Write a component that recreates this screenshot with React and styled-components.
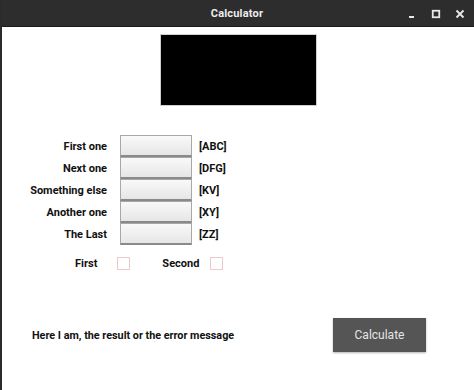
import React from "react";
import styled, { createGlobalStyle } from "styled-components";

const Global = createGlobalStyle`
  html, body { margin: 0; padding: 0; background: #fff; }
  body { font-family: Roboto, "Liberation Sans", sans-serif; }
`;

const Window = styled.div`
  width: 474px;
  height: 390px;
  display: flex;
  flex-direction: column;
  box-sizing: border-box;
  border-left: 2px solid #2b2b2b;
  background: #fff;
  overflow: hidden;
`;

const TitleBar = styled.div`
  height: 27px;
  flex: none;
  background: #2d2d2d;
  border-bottom: 1px solid #1a1a1a;
  box-sizing: border-box;
  margin-left: -2px;
  position: relative;
  display: flex;
  align-items: center;
  justify-content: center;
`;

const Title = styled.div`
  color: #ececec;
  font-family: Roboto, "Noto Sans", sans-serif;
  font-weight: 700;
  font-size: 11px;
  letter-spacing: 0.2px;
`;

const Controls = styled.div`
  position: absolute;
  right: 8px;
  top: 0;
  height: 27px;
  display: flex;
  align-items: center;
  gap: 12px;
`;

const Ctl = styled.div`
  width: 12px;
  height: 12px;
  display: flex;
  align-items: center;
  justify-content: center;
`;

const Body = styled.div`
  flex: 1;
  display: flex;
  flex-direction: column;
`;

const Display = styled.div`
  margin: 7px 0 0 158px;
  width: 155px;
  height: 70px;
  background: #000;
  border: 1px solid #cfcfcf;
`;

const Form = styled.div`
  margin-top: 29px;
  display: grid;
  grid-template-columns: 105px 72px auto;
  grid-auto-rows: 22px;
`;

const Label = styled.div`
  font-weight: 700;
  font-size: 11px;
  color: #111;
  text-align: right;
  align-self: center;
`;

const InputCell = styled.div`
  margin-left: 13px;
  width: 72px;
  box-sizing: border-box;
  height: 22px;
  border: 1px solid #a8a8a8;
  border-bottom: 2px solid #8a8a8a;
  background: linear-gradient(#f9f9f9, #e6e6e6);
`;

const Unit = styled.div`
  font-weight: 700;
  font-size: 11px;
  color: #111;
  align-self: center;
  padding-left: 20px;
`;

const Checks = styled.div`
  margin-top: 11px;
  display: flex;
  align-items: center;
  height: 14px;
  padding-left: 73px;
`;

const CheckLabel = styled.span`
  font-weight: 700;
  font-size: 11px;
  color: #111;
  margin-right: ${(p) => p.$gap}px;
`;

const Box = styled.span`
  width: 11px;
  height: 11px;
  border: 1px solid #efc9c9;
  background: #fff;
  margin-right: ${(p) => p.$gap}px;
`;

const Bottom = styled.div`
  margin-top: 48px;
  display: flex;
  align-items: center;
  padding-left: 30px;
`;

const Result = styled.div`
  font-weight: 700;
  font-size: 10.8px;
  color: #111;
  flex: 1;
`;

const Button = styled.button`
  width: 93px;
  height: 34px;
  margin-right: 48px;
  background: #555555;
  color: #e6e6e6;
  border: none;
  box-shadow: 0 1px 2px rgba(0,0,0,0.3);
  font-family: Roboto, "Liberation Sans", sans-serif;
  font-size: 12px;
  padding: 0;
`;

const rows = [
  ["First one", "[ABC]"],
  ["Next one", "[DFG]"],
  ["Something else", "[KV]"],
  ["Another one", "[XY]"],
  ["The Last", "[ZZ]"],
];

export default function App() {
  return (
    <>
      <Global />
      <Window>
        <TitleBar>
          <Title>Calculator</Title>
          <Controls>
            <Ctl>
              <svg width="12" height="12" viewBox="0 0 12 12">
                <rect x="3" y="8" width="5" height="2" fill="#e8e8e8" />
              </svg>
            </Ctl>
            <Ctl>
              <svg width="12" height="12" viewBox="0 0 12 12">
                <rect x="2.75" y="2.75" width="6.5" height="6.5" fill="none" stroke="#e8e8e8" strokeWidth="1.8" />
              </svg>
            </Ctl>
            <Ctl>
              <svg width="12" height="12" viewBox="0 0 12 12">
                <path d="M2.5 2.5 L9.5 9.5 M9.5 2.5 L2.5 9.5" stroke="#e8e8e8" strokeWidth="1.8" />
              </svg>
            </Ctl>
          </Controls>
        </TitleBar>
        <Body>
          <Display />
          <Form>
            {rows.map(([l, u]) => (
              <React.Fragment key={l}>
                <Label>{l}</Label>
                <InputCell />
                <Unit>{u}</Unit>
              </React.Fragment>
            ))}
          </Form>
          <Checks>
            <CheckLabel $gap={20}>First</CheckLabel>
            <Box $gap={32} />
            <CheckLabel $gap={11}>Second</CheckLabel>
            <Box $gap={0} />
          </Checks>
          <Bottom>
            <Result>Here I am, the result or the error message</Result>
            <Button>Calculate</Button>
          </Bottom>
        </Body>
      </Window>
    </>
  );
}
